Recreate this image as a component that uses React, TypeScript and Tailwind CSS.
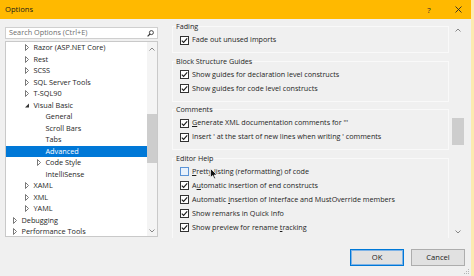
import React from "react";

type TreeItem = { label: string; level: number; kind: "collapsed" | "expanded" | "leaf"; selected?: boolean };

const tree: TreeItem[] = [
  { label: "Razor (ASP.NET Core)", level: 2, kind: "collapsed" },
  { label: "Rest", level: 2, kind: "collapsed" },
  { label: "SCSS", level: 2, kind: "collapsed" },
  { label: "SQL Server Tools", level: 2, kind: "collapsed" },
  { label: "T-SQL90", level: 2, kind: "collapsed" },
  { label: "Visual Basic", level: 2, kind: "expanded" },
  { label: "General", level: 3, kind: "leaf" },
  { label: "Scroll Bars", level: 3, kind: "leaf" },
  { label: "Tabs", level: 3, kind: "leaf" },
  { label: "Advanced", level: 3, kind: "leaf", selected: true },
  { label: "Code Style", level: 3, kind: "collapsed" },
  { label: "IntelliSense", level: 3, kind: "leaf" },
  { label: "XAML", level: 2, kind: "collapsed" },
  { label: "XML", level: 2, kind: "collapsed" },
  { label: "YAML", level: 2, kind: "collapsed" },
  { label: "Debugging", level: 1, kind: "collapsed" },
  { label: "Performance Tools", level: 1, kind: "collapsed" },
];

const indent: Record<number, string> = { 1: "pl-[6.5px]", 2: "pl-[18.5px]", 3: "pl-[30.5px]" };

function Arrow({ kind, selected }: { kind: TreeItem["kind"]; selected?: boolean }) {
  if (kind === "collapsed")
    return (
      <svg width="4" height="7" viewBox="0 0 4 7" className="shrink-0">
        <polygon points="0.5,0.5 3.5,3.5 0.5,6.5" fill="none" stroke={selected ? "#fff" : "#6a6a6a"} strokeWidth="0.9" />
      </svg>
    );
  if (kind === "expanded")
    return (
      <svg width="4" height="5" viewBox="0 0 4 5" className="shrink-0">
        <polygon points="4,0.5 4,4.5 0,4.5" fill="#333" />
      </svg>
    );
  return null;
}

function Chevron({ up }: { up?: boolean }) {
  return (
    <svg width="6" height="4" viewBox="0 0 6 4">
      <polyline points={up ? "0.5,3.5 3,1 5.5,3.5" : "0.5,0.5 3,3 5.5,0.5"} fill="none" stroke="#7a7a7a" strokeWidth="0.9" />
    </svg>
  );
}

function Check({ checked = true, hover = false }: { checked?: boolean; hover?: boolean }) {
  return (
    <span
      className={
        "mr-[3px] flex h-[9px] w-[9px] shrink-0 items-center justify-center border " +
        (hover ? "border-[#5b93d6] bg-[#e8f1fc]" : "border-[#333333] bg-white")
      }
    >
      {checked && (
        <svg width="7" height="7" viewBox="0 0 7 7">
          <polyline points="0.8,3.6 2.6,5.4 6.2,1.4" fill="none" stroke="#1a1a1a" strokeWidth="1.1" />
        </svg>
      )}
    </span>
  );
}

function Row({ children, checked = true, hover = false }: { children: React.ReactNode; checked?: boolean; hover?: boolean }) {
  return (
    <div className="flex h-[14px] items-center pl-[4px] leading-none whitespace-nowrap">
      <Check checked={checked} hover={hover} />
      <span>{children}</span>
    </div>
  );
}

function Section({ title, children, first = false }: { title: string; children: React.ReactNode; first?: boolean }) {
  return (
    <fieldset className={(first ? "" : "mt-[1.5px] ") + "border border-[#f9f9f9] px-[3px] pb-[5px]"}>
      <legend className="px-0 leading-[13px] whitespace-nowrap">{title}</legend>
      {children}
    </fieldset>
  );
}

export default function App() {
  return (
    <div className="relative flex h-[276px] w-[474px] flex-col overflow-hidden border-r-[3px] border-[#fcebb0] bg-[#f0f0f0] font-['Open_Sans',sans-serif] text-[#1e1e1e]">
      {/* Title bar */}
      <div className="flex h-[19px] shrink-0 items-center bg-[#ffb900] pl-[5px]">
        <span className="text-[7.6px] leading-none text-[#1a1a1a]">Options</span>
        <div className="ml-auto flex w-[32px] items-center justify-center text-[8px] leading-none text-[#2a2a2a]">?</div>
        <div className="flex w-[26px] items-center justify-center">
          <svg width="7" height="7" viewBox="0 0 7 7">
            <path d="M0.5 0.5 L6.5 6.5 M6.5 0.5 L0.5 6.5" stroke="#2a2a2a" strokeWidth="0.9" />
          </svg>
        </div>
      </div>

      {/* Main */}
      <div className="flex h-[221px] shrink-0 pl-[5px] pr-[7px]">
        {/* Left column */}
        <div className="flex w-[153px] shrink-0 flex-col pt-[8px]">
          <div className="flex h-[12px] items-center border border-[#cfcfcf] bg-white pl-[3px] pr-[3px]">
            <span className="text-[7.3px] leading-none text-[#6d6d6d]">Search Options (Ctrl+E)</span>
            <svg width="7" height="7" viewBox="0 0 7 7" className="ml-auto">
              <circle cx="4.4" cy="2.6" r="2" fill="none" stroke="#333" strokeWidth="0.9" />
              <line x1="3" y1="4" x2="0.6" y2="6.4" stroke="#333" strokeWidth="1.1" />
            </svg>
          </div>
          <div className="mt-[2px] flex h-[196px] border border-[#c9c9c9] bg-white">
            <div className="flex flex-1 flex-col overflow-hidden text-[7.3px] leading-none">
              {tree.map((t) => (
                <div
                  key={t.label}
                  className={
                    "flex h-[11.5px] shrink-0 items-center whitespace-nowrap " +
                    indent[t.level] +
                    (t.selected ? " bg-[#0078d7] text-white" : "")
                  }
                >
                  <span className="flex w-[9px] shrink-0 items-center">
                    <Arrow kind={t.kind} selected={t.selected} />
                  </span>
                  <span>{t.label}</span>
                </div>
              ))}
            </div>
            <div className="flex w-[10px] shrink-0 flex-col bg-[#f4f4f4]">
              <div className="flex h-[14px] items-center justify-center">
                <Chevron up />
              </div>
              <div className="mt-[58px] h-[49px] bg-[#cdcdcd]" />
              <div className="flex-1" />
              <div className="flex h-[10px] items-center justify-center">
                <Chevron />
              </div>
            </div>
          </div>
        </div>

        {/* Right column */}
        <div className="ml-[10px] flex flex-1 pb-[2px] pt-[5px]">
          <div className="flex-1 overflow-hidden pl-[4px] pr-[3px] text-[7.2px]">
            <div className="-mt-[4px]">
              <Section title="Fading" first>
                <Row>Fade out unused imports</Row>
              </Section>
              <Section title="Block Structure Guides">
                <Row>Show guides for declaration level constructs</Row>
                <Row>Show guides for code level constructs</Row>
              </Section>
              <Section title="Comments">
                <Row>
                  <u className="decoration-[0.6px] underline-offset-[1px]">G</u>enerate XML documentation comments for '''
                </Row>
                <Row>Insert ' at the start of new lines when writing ' comments</Row>
              </Section>
              <Section title="Editor Help">
                <Row checked={false} hover>
                  <u className="decoration-[0.6px] underline-offset-[1px]">P</u>retty listing (reformatting) of code
                </Row>
                <Row>
                  A<u className="decoration-[0.6px] underline-offset-[1px]">u</u>tomatic insertion of end constructs
                </Row>
                <Row>
                  Automatic <u className="decoration-[0.6px] underline-offset-[1px]">i</u>nsertion of Interface and MustOverride members
                </Row>
                <Row>Show remarks in Quick Info</Row>
                <Row>
                  Show preview for rename <u className="decoration-[0.6px] underline-offset-[1px]">t</u>racking
                </Row>
              </Section>
            </div>
          </div>
          <div className="flex w-[12px] shrink-0 flex-col">
            <div className="flex h-[12px] items-center justify-center">
              <Chevron up />
            </div>
            <div className="mt-[82px] h-[27px] bg-[#cdcdcd]" />
            <div className="flex-1" />
            <div className="flex h-[12px] items-center justify-center">
              <Chevron />
            </div>
          </div>
        </div>
      </div>

      {/* Buttons */}
      <div className="flex justify-end gap-[7px] pr-[6px] pt-[9px]">
        <button className="flex h-[17px] w-[54px] items-center justify-center border border-[#0078d7] bg-[#e1e1e1] text-[7.6px] leading-none text-[#1a1a1a] shadow-[inset_0_0_0_1px_#7fb3e6]">
          OK
        </button>
        <button className="flex h-[17px] w-[54px] items-center justify-center border border-[#adadad] bg-[#e1e1e1] text-[7.6px] leading-none text-[#1a1a1a]">
          Cancel
        </button>
      </div>

      {/* Resize grip */}
      <svg width="6" height="6" viewBox="0 0 6 6" className="absolute bottom-[1px] right-[1px]">
        <rect x="4" y="0" width="1" height="1" fill="#b5b5b5" />
        <rect x="2" y="2" width="1" height="1" fill="#b5b5b5" />
        <rect x="4" y="2" width="1" height="1" fill="#b5b5b5" />
        <rect x="0" y="4" width="1" height="1" fill="#b5b5b5" />
        <rect x="2" y="4" width="1" height="1" fill="#b5b5b5" />
        <rect x="4" y="4" width="1" height="1" fill="#b5b5b5" />
      </svg>

      {/* Mouse cursor */}
      <svg width="8" height="12" viewBox="0 0 8 12" className="absolute left-[210px] top-[168px]">
        <path d="M0.5 0.5 L0.5 9.5 L2.7 7.5 L4.2 10.8 L5.5 10.2 L4.1 7 L7 7 Z" fill="#111" stroke="#fff" strokeWidth="0.7" />
      </svg>
    </div>
  );
}
